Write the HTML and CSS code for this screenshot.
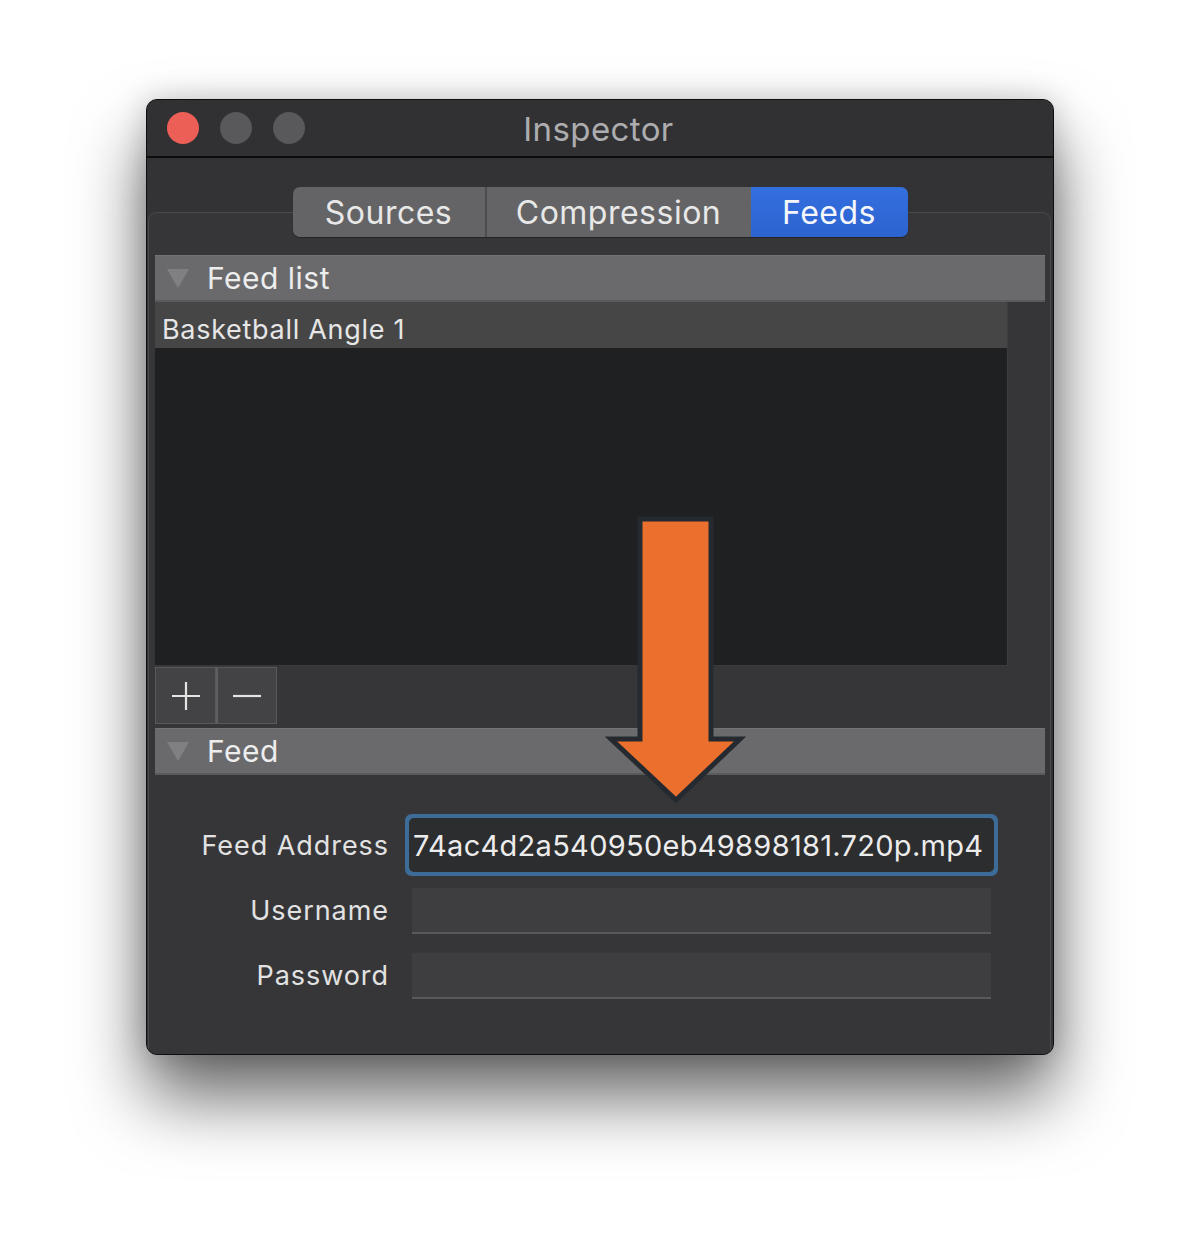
FILE: index.html
```
<!DOCTYPE html>
<html>
<head>
<meta charset="utf-8">
<link rel="stylesheet" href="styles.css">
</head>
<body>
<div class="window">
  <div class="titlebar">
    <div class="lights">
      <span class="light red"></span>
      <span class="light"></span>
      <span class="light"></span>
    </div>
    <div class="title">Inspector</div>
  </div>
  <div class="content">
    <div class="tabs">
      <div class="tab tab-sources">Sources</div>
      <div class="tab tab-compression">Compression</div>
      <div class="tab tab-feeds active">Feeds</div>
    </div>
    <div class="box">
      <div class="section-header"><span class="disclosure"></span><span>Feed list</span></div>
      <div class="list-area">
        <div class="list">
          <div class="row selected">Basketball Angle 1</div>
        </div>
      </div>
      <div class="buttons">
        <div class="btn">
          <svg width="30" height="30" viewBox="0 0 30 30"><path d="M15 1V29M1 15H29" stroke="#e4e4e4" stroke-width="2.2" fill="none"/></svg>
        </div>
        <div class="btn">
          <svg width="30" height="30" viewBox="0 0 30 30"><path d="M1 15H29" stroke="#e4e4e4" stroke-width="2.2" fill="none"/></svg>
        </div>
      </div>
      <div class="section-header"><span class="disclosure"></span><span>Feed</span></div>
      <div class="form">
        <div class="label">Feed Address</div>
        <div class="field focused">74ac4d2a540950eb49898181.720p.mp4</div>
        <div class="label">Username</div>
        <div class="field"></div>
        <div class="label">Password</div>
        <div class="field"></div>
      </div>
    </div>
  </div>
  <svg class="arrow" width="160" height="300" viewBox="0 0 160 300">
    <polygon points="40,9 111,9 111,229 140,229 76,290 11,229 40,229" fill="#eb6f2d" stroke="#252a30" stroke-width="5" stroke-linejoin="miter"/>
  </svg>
</div>
</body>
</html>
```
FILE: styles.css
```
* { box-sizing: border-box; }
html, body { margin: 0; background: #ffffff; }
body {
  padding: 99px 0 0 146px;
  height: 1248px;
  font-family: "Inter", "Liberation Sans", sans-serif;
}
.window {
  position: relative;
  width: 908px;
  height: 956px;
  background: #353537;
  border: 1px solid #0e0e0f;
  border-radius: 11px;
  box-shadow: inset 0 0 0 1px #58585a, 0 42px 70px rgba(0,0,0,0.6), 0 0 30px rgba(0,0,0,0.18);
  overflow: hidden;
  display: flex;
  flex-direction: column;
}
.titlebar {
  position: relative;
  height: 58px;
  flex: none;
  background: #313133;
  border-bottom: 2px solid #0c0c0c;
  display: flex;
  align-items: center;
  padding-left: 20px;
}
.lights { display: flex; gap: 21px; }
.light {
  width: 32px;
  height: 32px;
  border-radius: 50%;
  background: #59595b;
}
.light.red { background: #ec5f57; }
.title {
  position: absolute;
  left: 0; right: 0; top: 0; bottom: 0;
  display: flex;
  align-items: center;
  justify-content: center;
  color: #adadaf;
  font-size: 33px;
  letter-spacing: 0.4px;
  padding-right: 3px;
  padding-top: 2px;
}
.content {
  flex: 1;
  display: flex;
  flex-direction: column;
  padding-top: 29px;
  background: #333335;
}
.tabs {
  position: relative;
  z-index: 2;
  display: flex;
  align-self: center;
  height: 50px;
  margin-bottom: -25px;
  border-radius: 7px;
  overflow: hidden;
  box-shadow: 0 1px 1px rgba(0,0,0,0.35);
}
.tab {
  display: flex;
  align-items: center;
  justify-content: center;
  background: #646466;
  color: #e8e8e8;
  font-size: 32px;
  letter-spacing: 0.5px;
}
.tab + .tab { border-left: 2px solid #4d4d4f; }
.tab-sources { width: 192px; }
.tab-compression { width: 266px; }
.tab-feeds { width: 157px; }
.tab.active {
  background: linear-gradient(#346fe0, #2c63cf);
  color: #f4f6fb;
  border-left: none;
}
.box {
  flex: 1;
  margin: 0 2px 0 1px;
  border: 1px solid #4a4a4c;
  border-bottom: none;
  border-radius: 9px 9px 0 0;
  background: #363638;
  padding: 42px 5px 0 6px;
  display: flex;
  flex-direction: column;
}
.section-header {
  height: 47px;
  flex: none;
  background: #6a6a6c;
  border-top: 1px solid #737375;
  border-bottom: 2px solid #5a5a5c;
  display: flex;
  align-items: center;
  color: #ededed;
  font-size: 30px;
  letter-spacing: 0.5px;
  gap: 18px;
  padding-left: 12px;
  padding-bottom: 1px;
}
.disclosure {
  width: 0;
  height: 0;
  border-left: 11px solid transparent;
  border-right: 11px solid transparent;
  border-top: 19px solid #808082;
  margin-top: 2px;
}
.list-area {
  height: 364px;
  flex: none;
  padding-right: 37px;
}
.list {
  height: 100%;
  background: #1f2022;
  border-right: 1px solid #3d3d3f;
  border-bottom: 1px solid #3a3a3c;
}
.row {
  height: 46px;
  display: flex;
  align-items: center;
  padding-left: 7px;
  padding-top: 8px;
  font-size: 27px;
  letter-spacing: 0.7px;
  color: #e6e6e6;
}
.row.selected { background: #464646; }
.buttons {
  display: flex;
  height: 57px;
  margin: 1px 0 4px 0;
}
.btn {
  width: 61px;
  height: 57px;
  background: #434345;
  border: 1px solid #5a5a5c;
  display: flex;
  align-items: center;
  justify-content: center;
}
.btn + .btn { border-left: 2px solid #5f5f61; }
.form {
  display: grid;
  grid-template-columns: 234px 579px;
  column-gap: 23px;
  row-gap: 18px;
  align-items: center;
  padding-top: 46px;
}
.label {
  text-align: right;
  color: #e2e2e2;
  font-size: 27px;
  letter-spacing: 0.95px;
}
.field {
  height: 47px;
  background: #3e3e40;
  border-top: 1px solid #38383a;
  border-bottom: 2px solid #59595b;
  color: #ececec;
  font-size: 29px;
  letter-spacing: 0.3px;
  display: flex;
  align-items: center;
  padding-left: 2px;
  white-space: nowrap;
  overflow: hidden;
}
.field.focused {
  height: 48px;
  background: #2c2d2f;
  border: none;
  border-radius: 2px;
  box-shadow: 0 0 0 3px #2c2d2f, 0 0 0 7px #3e6c98;
  padding-left: 1px;
}
.arrow {
  position: absolute;
  left: 453px;
  top: 410px;
  z-index: 5;
}
```
